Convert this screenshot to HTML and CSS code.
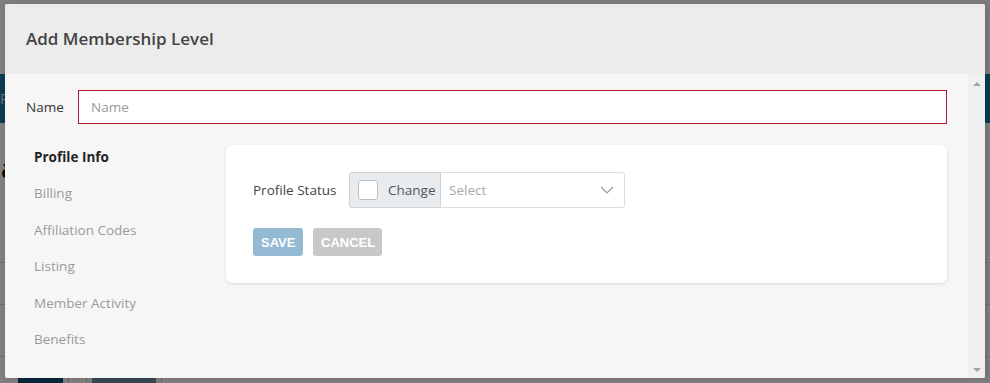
FILE: index.html
```html
<!DOCTYPE html>
<html lang="en">
<head>
    <meta charset="UTF-8">
    <meta name="viewport" content="width=device-width, initial-scale=1.0">
    <title>Add Membership Level</title>
    <link rel="stylesheet" href="styles.css">
</head>
<body>
    <div class="page">
        <div class="page-top"></div>
        <div class="page-nav"><span class="page-nav-text">R</span></div>
        <div class="page-head"><h2 class="page-title">a</h2></div>
        <div class="page-row"></div>
        <div class="page-row page-row-tall"></div>
        <div class="page-actions">
            <span class="page-btn page-btn-edit">EDIT</span>
            <span class="page-sep"></span>
            <span class="page-sep"></span>
            <span class="page-btn page-btn-delete">DELETE</span>
            <span class="page-sep"></span>
        </div>
    </div>

    <div class="backdrop"></div>

    <div class="modal">
        <div class="modal-header">
            <h4 class="modal-title">Add Membership Level</h4>
        </div>
        <div class="modal-body">
            <div class="modal-scroll">
                <div class="name-row">
                    <label class="name-label" for="name">Name</label>
                    <input class="name-input" id="name" type="text" placeholder="Name">
                </div>

                <div class="level-layout">
                    <ul class="side-nav">
                        <li class="side-link active">Profile Info</li>
                        <li class="side-link">Billing</li>
                        <li class="side-link">Affiliation Codes</li>
                        <li class="side-link">Listing</li>
                        <li class="side-link">Member Activity</li>
                        <li class="side-link">Benefits</li>
                    </ul>

                    <div class="card">
                        <div class="field-row">
                            <span class="field-label">Profile Status</span>
                            <div class="input-group">
                                <div class="addon">
                                    <span class="checkbox"></span>
                                    <span class="addon-text">Change</span>
                                </div>
                                <div class="select">
                                    <span class="select-placeholder">Select</span>
                                    <svg class="chevron" width="14" height="8" viewBox="0 0 14 8">
                                        <path d="M1 1 L7 7 L13 1" fill="none" stroke="#9a9a9a" stroke-width="1.2"/>
                                    </svg>
                                </div>
                            </div>
                        </div>
                        <div class="card-actions">
                            <button class="btn btn-save">SAVE</button>
                            <button class="btn btn-cancel">CANCEL</button>
                        </div>
                    </div>
                </div>
            </div>
            <div class="scrollbar">
                <span class="arrow arrow-up"></span>
                <span class="arrow arrow-down"></span>
            </div>
        </div>
    </div>
</body>
</html>
```

FILE: styles.css
```css
* {
    margin: 0;
    padding: 0;
    box-sizing: border-box;
}

body {
    width: 990px;
    height: 383px;
    overflow: hidden;
    position: relative;
    font-family: 'Open Sans', 'Noto Sans', sans-serif;
    background: #ffffff;
}

/* page behind the dialog */
.page {
    height: 383px;
    overflow: hidden;
}

.page-top {
    height: 74px;
}

.page-nav {
    height: 49px;
    background: #17789f;
    display: flex;
    align-items: center;
}

.page-nav-text {
    color: #dfe9ef;
    font-size: 14px;
}

.page-head {
    height: 140px;
    padding: 30px 0 0 1px;
    border-bottom: 1px solid #dddddd;
}

.page-title {
    font-size: 26px;
    line-height: 30px;
    font-weight: 700;
    color: #111111;
}

.page-row {
    height: 42px;
    border-bottom: 1px solid #dddddd;
}

.page-row-tall {
    height: 52px;
}

.page-actions {
    display: flex;
    align-items: flex-start;
    padding: 21px 0 0 18px;
}

.page-btn {
    display: inline-block;
    height: 22px;
    padding: 4px 8px;
    color: #ffffff;
    font-size: 12px;
    font-weight: 700;
}

.page-btn-edit {
    width: 45px;
    background: #0f4f78;
}

.page-btn-delete {
    width: 64px;
    background: #6f8fa8;
}

.page-sep {
    width: 1px;
    height: 30px;
    background: #cccccc;
    margin: 0 6px 0 5px;
}

.page-sep + .page-sep {
    margin: 0 5px 0 11px;
}

.backdrop {
    position: absolute;
    inset: 0;
    background: rgba(0, 0, 0, 0.5);
}

/* dialog */
.modal {
    position: absolute;
    left: 5px;
    top: 4px;
    width: 980px;
    height: 374px;
    display: flex;
    flex-direction: column;
    background: #f6f6f6;
    border-radius: 2px;
    box-shadow: 2px 0 6px rgba(0, 0, 0, 0.15);
    overflow: hidden;
}

.modal-header {
    height: 70px;
    background: #ececec;
    display: flex;
    align-items: center;
    padding-left: 21px;
}

.modal-title {
    font-size: 17px;
    font-weight: 600;
    color: #444444;
    margin-top: -2px;
}

.modal-body {
    flex: 1;
    display: flex;
    overflow: hidden;
}

.modal-scroll {
    flex: 1;
    padding: 16px 21px 0 21px;
}

.scrollbar {
    width: 17px;
    background: #efefef;
    display: flex;
    flex-direction: column;
    justify-content: space-between;
    align-items: center;
    padding: 8px 0 6px;
}

.arrow {
    width: 0;
    height: 0;
    border-left: 4px solid transparent;
    border-right: 4px solid transparent;
}

.arrow-up {
    border-bottom: 4px solid #a3a3a3;
}

.arrow-down {
    border-top: 4px solid #a3a3a3;
}

.name-row {
    display: flex;
    align-items: center;
}

.name-label {
    width: 52px;
    font-size: 13.5px;
    color: #333333;
}

.name-input {
    flex: 1;
    height: 34px;
    border: 1px solid #b01d30;
    background: #ffffff;
    padding: 0 12px;
    font-family: inherit;
    font-size: 13.5px;
    color: #333333;
    outline: none;
}

.name-input::placeholder {
    color: #9a9a9a;
}

.level-layout {
    display: flex;
    align-items: flex-start;
    margin-top: 21px;
}

.side-nav {
    list-style: none;
    width: 200px;
    padding-left: 8px;
    margin-top: -6px;
}

.side-link {
    height: 36.4px;
    line-height: 36.4px;
    font-size: 13.5px;
    color: #9a9a9a;
}

.side-link.active {
    color: #222222;
    font-weight: 700;
}

.card {
    flex: 1;
    background: #ffffff;
    border-radius: 6px;
    box-shadow: 0 1px 3px rgba(0, 0, 0, 0.12);
    padding: 27px;
    height: 138px;
}

.field-row {
    display: flex;
    align-items: center;
}

.field-label {
    width: 96px;
    font-size: 13.5px;
    color: #444444;
}

.input-group {
    display: flex;
    width: 276px;
    height: 36px;
}

.addon {
    width: 92px;
    display: flex;
    align-items: center;
    padding-left: 8px;
    background: #e9ecef;
    border: 1px solid #cfd3d7;
    border-radius: 3px 0 0 3px;
}

.checkbox {
    width: 20px;
    height: 20px;
    background: #ffffff;
    border: 1px solid #bdbdbd;
    border-radius: 3px;
}

.addon-text {
    margin-left: 10px;
    font-size: 13.5px;
    color: #555555;
}

.select {
    flex: 1;
    display: flex;
    align-items: center;
    justify-content: space-between;
    padding: 0 10px 0 8px;
    border: 1px solid #dddddd;
    border-left: none;
    border-radius: 0 3px 3px 0;
    background: #ffffff;
}

.select-placeholder {
    font-size: 13.5px;
    color: #a8a8a8;
}

.card-actions {
    display: flex;
    gap: 10px;
    margin-top: 20px;
}

.btn {
    height: 28px;
    padding: 0 8px;
    border: none;
    border-radius: 3px;
    color: #ffffff;
    font-family: 'Liberation Sans', Arial, sans-serif;
    font-size: 13px;
    font-weight: 700;
}

.btn-save {
    width: 50px;
    background: #93b9d3;
}

.btn-cancel {
    width: 69px;
    background: #c8c8c8;
}
```
